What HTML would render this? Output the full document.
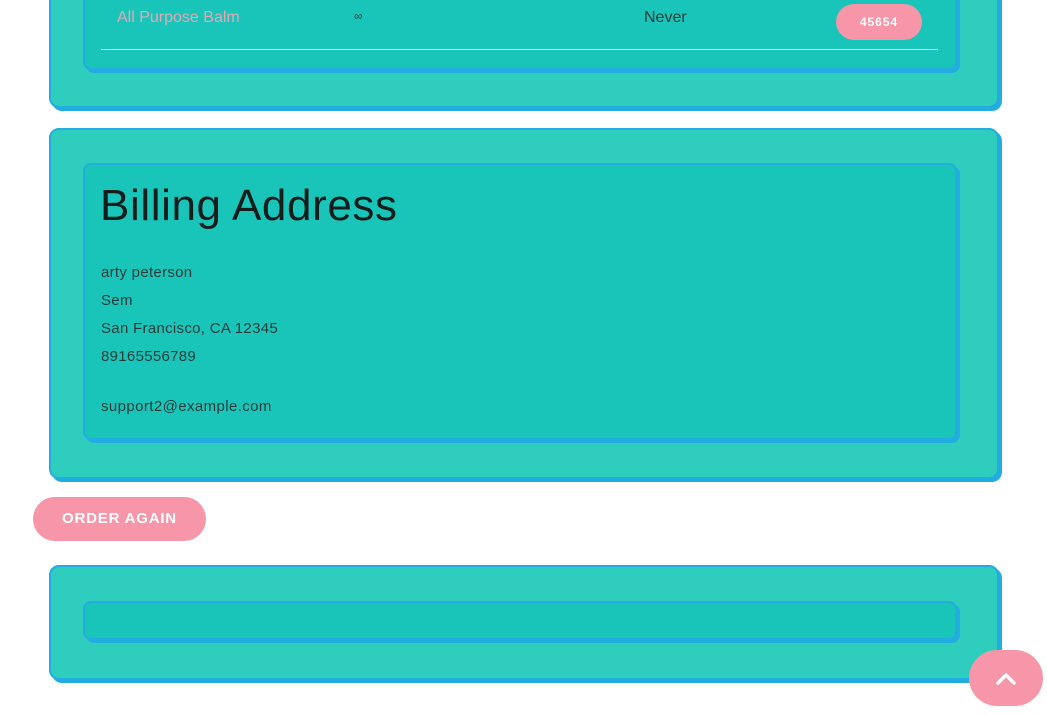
<!DOCTYPE html>
<html><head><meta charset="utf-8"><style>
html,body{margin:0;padding:0;width:1047px;height:715px;overflow:hidden;background:#fff;font-family:"Liberation Sans",sans-serif;}
.o{position:absolute;left:49px;width:946px;background:#2fcdbd;border:2px solid #22ace0;border-radius:10px;box-shadow:3px 3px 0 #22ace0;}
.i{position:absolute;left:83px;width:870px;background:#19c5b9;border:2px solid #22ace0;border-radius:8px;box-shadow:3px 3px 0 #22ace0;}
.t{position:absolute;font-size:15px;color:#263c3a;}
</style></head><body>
<div class="o" style="top:-20px;height:124px"></div>
<div class="i" style="top:-20px;height:86px"></div>
<div class="t" style="left:117px;top:9px;color:#e7a6b3;font-size:16px">All Purpose Balm</div>
<div class="t" style="left:354px;top:9px;font-size:12px">∞</div>
<div class="t" style="left:644px;top:9px;font-size:16px">Never</div>
<div style="position:absolute;left:836px;top:4px;width:86px;height:36px;border-radius:18px;background:#f795a9;color:#fff;font-weight:bold;font-size:12px;text-align:center;line-height:36px;letter-spacing:1px">45654</div>
<div style="position:absolute;left:101px;top:49px;width:837px;height:1px;background:#e6f7f5"></div>

<div class="o" style="top:128px;height:347px"></div>
<div class="i" style="top:163px;height:273px"></div>
<div style="position:absolute;left:100px;top:181px;font-size:44px;color:#151c1c;letter-spacing:0.6px">Billing Address</div>
<div class="t" style="left:101px;top:259px;line-height:28px;letter-spacing:0.3px">arty peterson<br>Sem<br>San Francisco, CA 12345<br>89165556789</div>
<div class="t" style="left:101px;top:398px;letter-spacing:0.4px">support2@example.com</div>

<div style="position:absolute;left:33px;top:497px;width:173px;height:44px;border-radius:22px;background:#f795a9;color:#fff;font-weight:bold;font-size:15px;text-align:center;line-height:44px;letter-spacing:.8px">ORDER AGAIN</div>

<div class="o" style="top:565px;height:111px"></div>
<div class="i" style="top:601px;height:35px"></div>

<div style="position:absolute;left:969px;top:650px;width:74px;height:56px;border-radius:28px;background:#f795a9">
<svg width="74" height="56"><path d="M29 33 L37 25 L45 33" stroke="#fff" stroke-width="3.5" fill="none" stroke-linecap="round" stroke-linejoin="round"/></svg></div>
</body></html>
